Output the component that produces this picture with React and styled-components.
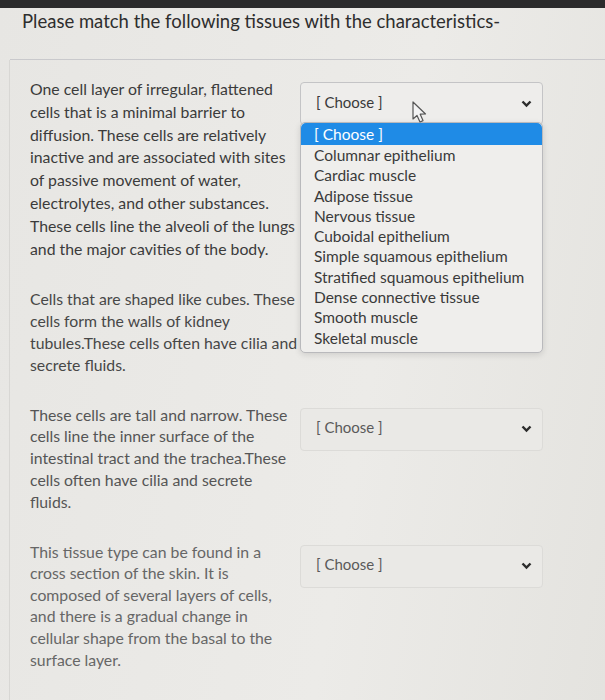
import styled, { createGlobalStyle } from "styled-components";

const GlobalStyle = createGlobalStyle`
  html, body {
    margin: 0;
    padding: 0;
    background: #e9e8e5;
  }
  body {
    font-family: Lato, "Open Sans", sans-serif;
  }
`;

const questions = [
  {
    text: "One cell layer of irregular, flattened cells that is a minimal barrier to diffusion. These cells are relatively inactive and are associated with sites of passive movement of water, electrolytes, and other substances. These cells line the alveoli of the lungs and the major cavities of the body.",
    open: true,
    tone: "#3b3b3b",
    width: 268,
    lead: 22.8,
  },
  {
    text: "Cells that are shaped like cubes. These cells form the walls of kidney tubules.These cells often have cilia and secrete fluids.",
    tone: "#474747",
    width: 270,
    lead: 21.8,
  },
  {
    text: "These cells are tall and narrow. These cells line the inner surface of the intestinal tract and the trachea.These cells often have cilia and secrete fluids.",
    tone: "#555",
    width: 262,
    lead: 21.8,
  },
  {
    text: "This tissue type can be found in a cross section of the skin. It is composed of several layers of cells, and there is a gradual change in cellular shape from the basal to the surface layer.",
    tone: "#666",
    width: 262,
    lead: 21.6,
  },
];

const options = [
  "[ Choose ]",
  "Columnar epithelium",
  "Cardiac muscle",
  "Adipose tissue",
  "Nervous tissue",
  "Cuboidal epithelium",
  "Simple squamous epithelium",
  "Stratified squamous epithelium",
  "Dense connective tissue",
  "Smooth muscle",
  "Skeletal muscle",
];

const Page = styled.div`
  position: relative;
  width: 605px;
  height: 700px;
  overflow: hidden;
  display: flex;
  flex-direction: column;
  background: linear-gradient(100deg, #e7e6e3 0%, #ecebe8 60%, #e4e3df 100%);
`;

const TopBar = styled.div`
  height: 8px;
  flex: none;
  background: #2b2b2c;
`;

const Header = styled.header`
  height: 51px;
  flex: none;
  margin-left: 10px;
  padding-left: 12px;
  border-bottom: 1px solid #c9c9cc;
`;

const Title = styled.h1`
  margin: 0;
  font-size: 18.5px;
  font-weight: 400;
  line-height: 26px;
  color: #2e2e2e;
`;

const Body = styled.div`
  flex: 1;
  margin-left: 9px;
  border-left: 1px solid #d8d7d4;
  padding: 18px 0 0 20px;
  display: flex;
  flex-direction: column;
  gap: 28px;
`;

const Row = styled.div`
  display: flex;
  align-items: flex-start;
  gap: 2px;
  position: relative;
  z-index: ${(p) => (p.$raised ? 2 : 1)};
`;

const Prompt = styled.p`
  margin: 0;
  width: 268px;
  flex: none;
  font-size: 15.8px;
  line-height: ${(p) => p.$lead}px;
  color: ${(p) => p.$tone};

  span {
    display: block;
    width: ${(p) => p.$wrap}px;
  }
`;

const SelectWrap = styled.div`
  position: relative;
  width: 243px;
  margin-top: 4px;
`;

const SelectBox = styled.div`
  height: 43px;
  box-sizing: border-box;
  display: flex;
  align-items: center;
  justify-content: space-between;
  padding: 0 10px 4px 15px;
  border: 1px solid ${(p) => (p.$open ? "#c4c4c6" : "#dcdbd8")};
  border-radius: 4px;
  background: ${(p) => (p.$open ? "#eeedeb" : "#eae9e6")};
  font-size: 15px;
  color: ${(p) => p.$tone};
`;

const Chevron = styled.svg`
  width: 11px;
  height: 8px;
  margin-top: 4px;
`;

const Menu = styled.ul`
  position: absolute;
  top: 40px;
  left: 0;
  width: 241px;
  margin: 0;
  padding: 0 0 4px;
  list-style: none;
  background: #efeeec;
  border: 1px solid #b9b9bc;
  border-radius: 5px;
  box-shadow: 0 2px 6px rgba(0, 0, 0, 0.12);
`;

const Option = styled.li`
  height: ${(p) => (p.$active ? "22px" : "20.3px")};
  line-height: ${(p) => (p.$active ? "22px" : "20.3px")};
  padding-left: 13px;
  font-size: 15.5px;
  white-space: nowrap;
  color: ${(p) => (p.$active ? "#fff" : "#3a3a3a")};
  background: ${(p) => (p.$active ? "#1f8be6" : "transparent")};
  border-radius: ${(p) => (p.$active ? "5px 5px 0 0" : "0")};
`;

const Pointer = styled.svg`
  position: absolute;
  z-index: 5;
  left: 411px;
  top: 101px;
  width: 18px;
  height: 24px;
`;

function Select({ open, tone }) {
  return (
    <SelectWrap>
      <SelectBox $open={open} $tone={tone}>
        <span>[ Choose ]</span>
        <Chevron viewBox="0 0 11 8">
          <polyline
            points="1.5,1.5 5.5,5.5 9.5,1.5"
            fill="none"
            stroke="#2c2c2c"
            strokeWidth="2.4"
          />
        </Chevron>
      </SelectBox>
      {open && (
        <Menu>
          {options.map((o, i) => (
            <Option key={o} $active={i === 0}>
              {o}
            </Option>
          ))}
        </Menu>
      )}
    </SelectWrap>
  );
}

export default function App() {
  return (
    <>
      <GlobalStyle />
      <Page>
        <TopBar />
        <Header>
          <Title>Please match the following tissues with the characteristics-</Title>
        </Header>
        <Body>
          {questions.map((q, i) => (
            <Row key={i} $raised={q.open}>
              <Prompt $tone={q.tone} $wrap={q.width} $lead={q.lead}>
                <span>{q.text}</span>
              </Prompt>
              <Select open={q.open} tone={q.open ? "#3a3a3a" : "#5a5a5a"} />
            </Row>
          ))}
        </Body>
        <Pointer viewBox="0 0 18 24">
          <path
            d="M2 1 L2 18 L6 14.5 L9 21 L12 19.6 L9.2 13.2 L14.5 13 Z"
            fill="#f4f4f4"
            stroke="#555"
            strokeWidth="1.2"
            strokeLinejoin="round"
          />
        </Pointer>
      </Page>
    </>
  );
}
